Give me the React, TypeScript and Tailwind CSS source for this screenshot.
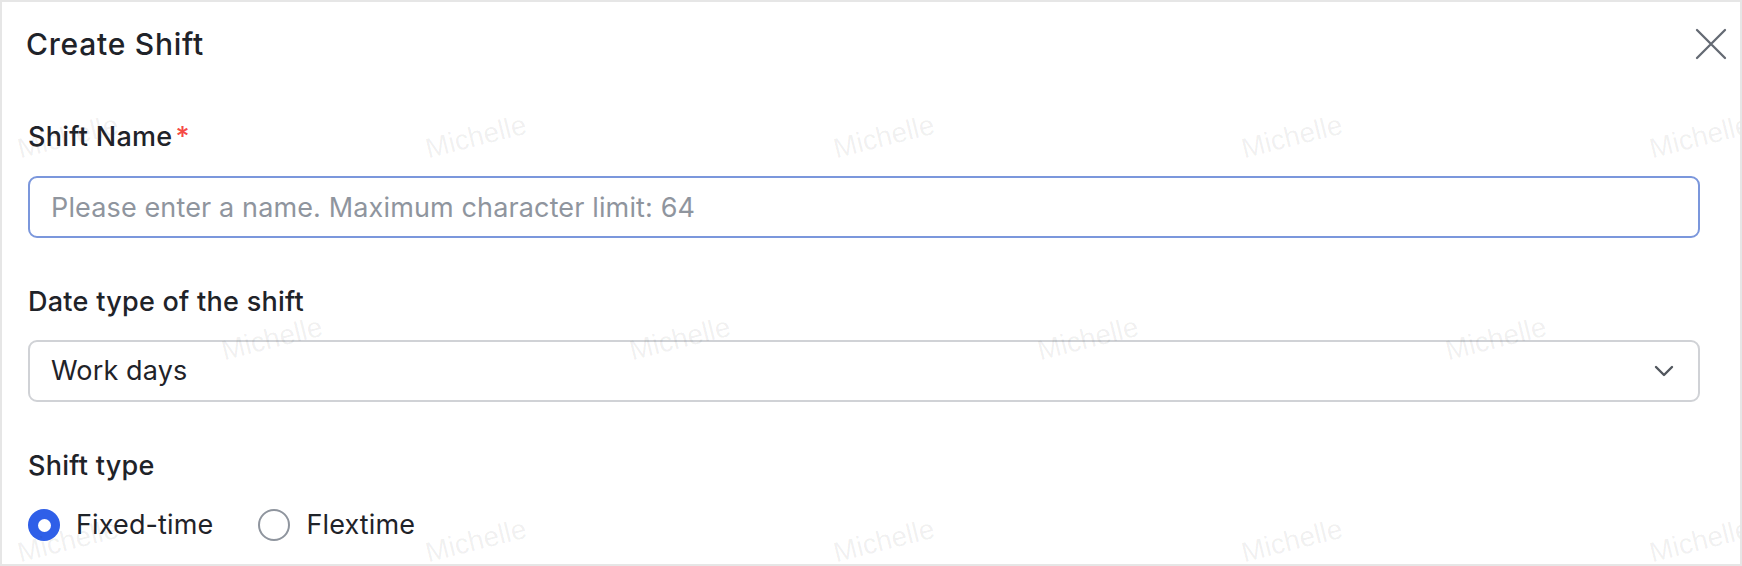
import { useState } from 'react';

const WATERMARKS = [
  ...[66, 474, 882, 1290, 1698].map((x) => ({ x, y: 135 })),
  ...[270, 678, 1086, 1494].map((x) => ({ x, y: 337 })),
  ...[66, 474, 882, 1290, 1698].map((x) => ({ x, y: 539 })),
];

function Watermark() {
  return (
    <div className="pointer-events-none absolute inset-0 overflow-hidden">
      {WATERMARKS.map((w, i) => (
        <span
          key={i}
          className="absolute -translate-x-1/2 -translate-y-1/2 -rotate-14 whitespace-nowrap text-[28px] leading-none text-[rgba(31,35,41,0.07)] font-['Liberation_Sans',Arial,sans-serif]"
          style={{ left: w.x, top: w.y }}
        >
          Michelle
        </span>
      ))}
    </div>
  );
}

function Radio({ checked, label, onClick }: { checked: boolean; label: string; onClick: () => void }) {
  return (
    <button type="button" onClick={onClick} className="flex items-center gap-[16px]">
      {checked ? (
        <span className="flex h-[32px] w-[32px] items-center justify-center rounded-full bg-[#2f5fe8]">
          <span className="h-[13px] w-[13px] rounded-full bg-white" />
        </span>
      ) : (
        <span className="h-[32px] w-[32px] rounded-full border-2 border-[#8f959e] bg-white" />
      )}
      <span className="text-[27px] leading-[36px] tracking-[0.005em] text-[#1f2329]">{label}</span>
    </button>
  );
}

export default function App() {
  const [shiftType, setShiftType] = useState('fixed');

  return (
    <div className="relative h-[566px] w-[1742px] overflow-hidden border-2 border-[#e6e6e6] bg-white font-['Inter','Noto_Sans',sans-serif] text-[#1f2329]">
      <div className="mt-[22px] flex h-[40px] items-center justify-between pl-[24px] pr-[13px]">
        <h1 className="text-[30px] font-medium leading-[40px] tracking-[0.025em]">Create Shift</h1>
        <button type="button" aria-label="Close" className="text-[#646a73]">
          <svg width="32" height="32" viewBox="0 0 32 32" fill="none" stroke="currentColor" strokeWidth="2.3" strokeLinecap="round">
            <path d="M2 2L30 30M30 2L2 30" />
          </svg>
        </button>
      </div>

      <div className="pl-[26px] pr-[40px] pt-[55px]">
        <label className="flex items-start text-[27px] font-medium leading-[36px] tracking-[0.01em]">
          Shift Name<span className="ml-[3px] text-[#f54a45]">*</span>
        </label>
        <input
          className="mt-[21px] h-[62px] w-full rounded-[9px] border-2 border-[#7b97dc] px-[21px] text-[27px] tracking-[0.005em] text-[#1f2329] outline-none placeholder:text-[#8f959e]"
          placeholder="Please enter a name. Maximum character limit: 64"
        />

        <div className="mt-[46px] text-[27px] font-medium leading-[36px] tracking-[0.01em]">Date type of the shift</div>
        <div className="mt-[20px] flex h-[62px] items-center justify-between rounded-[9px] border-2 border-[#d0d2d6] pl-[21px] pr-[24px]">
          <span className="text-[27px] tracking-[0.005em]">Work days</span>
          <svg width="20" height="12" viewBox="0 0 20 12" fill="none" stroke="#51565d" strokeWidth="2.4" strokeLinecap="round" strokeLinejoin="round">
            <path d="M2 2L10 10L18 2" />
          </svg>
        </div>

        <div className="mt-[46px] text-[27px] font-medium leading-[36px] tracking-[0.01em]">Shift type</div>
        <div className="mt-[23px] flex items-center gap-[45px]">
          <Radio checked={shiftType === 'fixed'} label="Fixed-time" onClick={() => setShiftType('fixed')} />
          <Radio checked={shiftType === 'flex'} label="Flextime" onClick={() => setShiftType('flex')} />
        </div>
      </div>

      <Watermark />
    </div>
  );
}
